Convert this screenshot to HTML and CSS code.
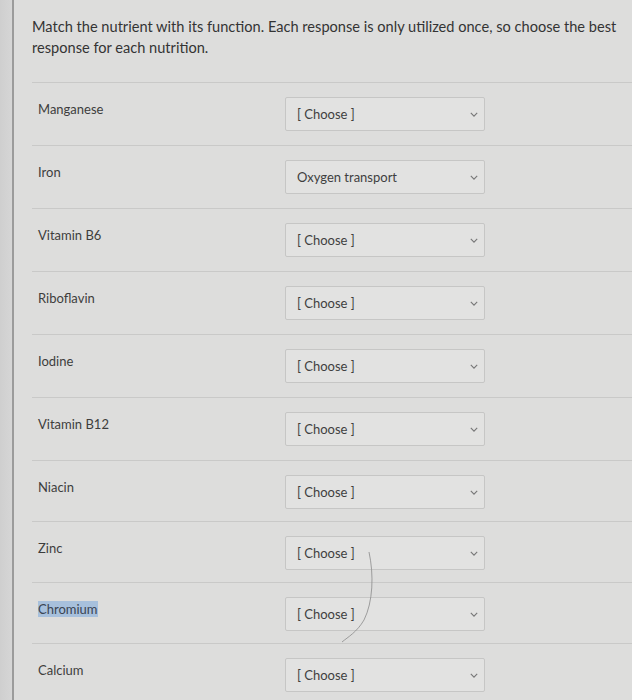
FILE: index.html
```html
<!DOCTYPE html>
<html lang="en">
<head>
<meta charset="utf-8">
<title>Match the nutrient</title>
<link rel="stylesheet" href="styles.css">
</head>
<body>
<div class="page">
  <div class="question">
    <p class="prompt">Match the nutrient with its function. Each response is only utilized once, so choose the best response for each nutrition.</p>
    <div class="rows">
      <div class="row"><span class="label">Manganese</span><div class="select"><span>[ Choose ]</span><svg class="chev" viewBox="0 0 10 6"><path d="M1 1 L5 5 L9 1"/></svg></div></div>
      <div class="row"><span class="label">Iron</span><div class="select"><span class="val">Oxygen transport</span><svg class="chev" viewBox="0 0 10 6"><path d="M1 1 L5 5 L9 1"/></svg></div></div>
      <div class="row"><span class="label">Vitamin B6</span><div class="select"><span>[ Choose ]</span><svg class="chev" viewBox="0 0 10 6"><path d="M1 1 L5 5 L9 1"/></svg></div></div>
      <div class="row"><span class="label">Riboflavin</span><div class="select"><span>[ Choose ]</span><svg class="chev" viewBox="0 0 10 6"><path d="M1 1 L5 5 L9 1"/></svg></div></div>
      <div class="row"><span class="label">Iodine</span><div class="select"><span>[ Choose ]</span><svg class="chev" viewBox="0 0 10 6"><path d="M1 1 L5 5 L9 1"/></svg></div></div>
      <div class="row"><span class="label">Vitamin B12</span><div class="select"><span>[ Choose ]</span><svg class="chev" viewBox="0 0 10 6"><path d="M1 1 L5 5 L9 1"/></svg></div></div>
      <div class="row"><span class="label">Niacin</span><div class="select"><span>[ Choose ]</span><svg class="chev" viewBox="0 0 10 6"><path d="M1 1 L5 5 L9 1"/></svg></div></div>
      <div class="row"><span class="label">Zinc</span><div class="select"><span>[ Choose ]</span><svg class="chev" viewBox="0 0 10 6"><path d="M1 1 L5 5 L9 1"/></svg></div></div>
      <div class="row"><span class="label"><span class="hl">Chromium</span></span><div class="select"><span>[ Choose ]</span><svg class="chev" viewBox="0 0 10 6"><path d="M1 1 L5 5 L9 1"/></svg></div></div>
      <div class="row last"><span class="label">Calcium</span><div class="select"><span>[ Choose ]</span><svg class="chev" viewBox="0 0 10 6"><path d="M1 1 L5 5 L9 1"/></svg></div></div>
    </div>
  </div>
  <svg class="pen" viewBox="0 0 632 700" width="632" height="700"><path d="M369 552 C 374 575, 373 602, 364 620 C 357 632, 348 637, 342 642"/></svg>
</div>
</body>
</html>
```

FILE: styles.css
```css
html, body {
  margin: 0;
  padding: 0;
}
body {
  background: #dcdcdb;
  font-family: Lato, "Open Sans", "Liberation Sans", sans-serif;
  color: #3b3b3b;
  width: 632px;
  height: 700px;
  overflow: hidden;
}
.page {
  position: relative;
  height: 700px;
  padding-left: 12px;
  background: linear-gradient(to right, #cfcfcf 0, #d6d6d6 12px, #dcdcdb 12px);
}
.question {
  border-left: 2px solid #9b9b9b;
  height: 700px;
  padding-left: 18px;
  background: #dddddc;
}
.prompt {
  margin: 0;
  padding-top: 16px;
  font-size: 14.6px;
  line-height: 21px;
  color: #343434;
  width: 600px;
}
.rows {
  margin-top: 24px;
  border-top: 1px solid #c9c9c8;
}
.row {
  display: flex;
  align-items: flex-start;
  border-bottom: 1px solid #c9c9c8;
  box-sizing: border-box;
  height: 63px;
}
.row:nth-child(n+7) {
  height: 61px;
}
.row.last {
  border-bottom: none;
}
.label {
  width: 247px;
  padding-left: 6px;
  padding-top: 18px;
  font-size: 13px;
  line-height: 16px;
  color: #3d3d3d;
}
.hl {
  background: #a7c0dc;
  color: #3a4452;
}
.select {
  margin-top: 14px;
  width: 200px;
  height: 34px;
  box-sizing: border-box;
  border: 1px solid #c6c6c5;
  border-radius: 2px;
  background: #e2e2e1;
  display: flex;
  align-items: center;
  justify-content: space-between;
  padding: 0 6px 0 11px;
  font-size: 13px;
  color: #3f3f3f;
}
.chev {
  width: 8px;
  height: 5px;
}
.chev path {
  fill: none;
  stroke: #777;
  stroke-width: 1.4;
}
.pen {
  position: absolute;
  left: 0;
  top: 0;
  pointer-events: none;
}
.pen path {
  fill: none;
  stroke: #8a8a8a;
  stroke-width: 0.8;
}
```
